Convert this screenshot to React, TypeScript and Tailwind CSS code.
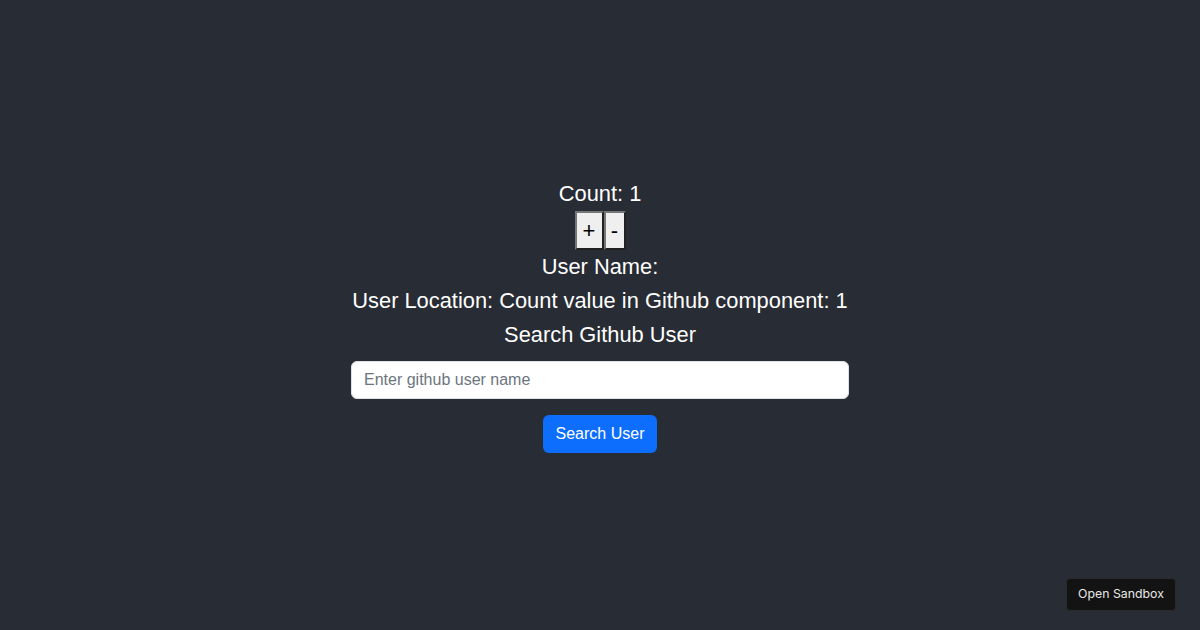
import { useState } from 'react'

export default function App() {
  const [count, setCount] = useState(1)
  const [user, setUser] = useState('')

  return (
    <div className="relative min-h-screen bg-[#282c34] text-white font-['Liberation_Sans',Arial,sans-serif]">
      <div className="min-h-screen flex flex-col items-center justify-center">
        <div className="w-[498px] flex flex-col items-center text-[21.85px] leading-[34px]">
          <div>Count: {count}</div>
          <div className="flex h-[39px]">
            <button
              onClick={() => setCount(count + 1)}
              className="w-[29px] h-[39px] bg-[#efefef] text-black text-[22px] border-2 [border-style:outset] border-[#767676]"
            >
              +
            </button>
            <button
              onClick={() => setCount(count - 1)}
              className="w-[22px] h-[39px] bg-[#efefef] text-black text-[22px] border-2 [border-style:outset] border-[#767676]"
            >
              -
            </button>
          </div>
          <div>User Name:</div>
          <div className="whitespace-nowrap">User Location: Count value in Github component: {count}</div>
          <div>Search Github User</div>
          <input
            value={user}
            onChange={(e) => setUser(e.target.value)}
            placeholder="Enter github user name"
            className="mt-[9px] w-[498px] h-[38px] rounded-[6px] border border-[#dee2e6] bg-white px-[12px] text-[16px] text-[#212529] placeholder:text-[#6c757d] outline-none"
          />
          <button className="mt-[16px] h-[38px] px-[13px] rounded-[6px] bg-[#0d6efd] text-white text-[16px] leading-[24px]">
            Search User
          </button>
        </div>
      </div>
      <button className="absolute right-[24px] bottom-[19px] w-[110px] h-[33px] rounded-[4px] bg-[#131313] border border-[#2a2a2a] text-[12.3px] text-[#e8e8e8] font-['Inter',sans-serif]">
        Open Sandbox
      </button>
    </div>
  )
}
